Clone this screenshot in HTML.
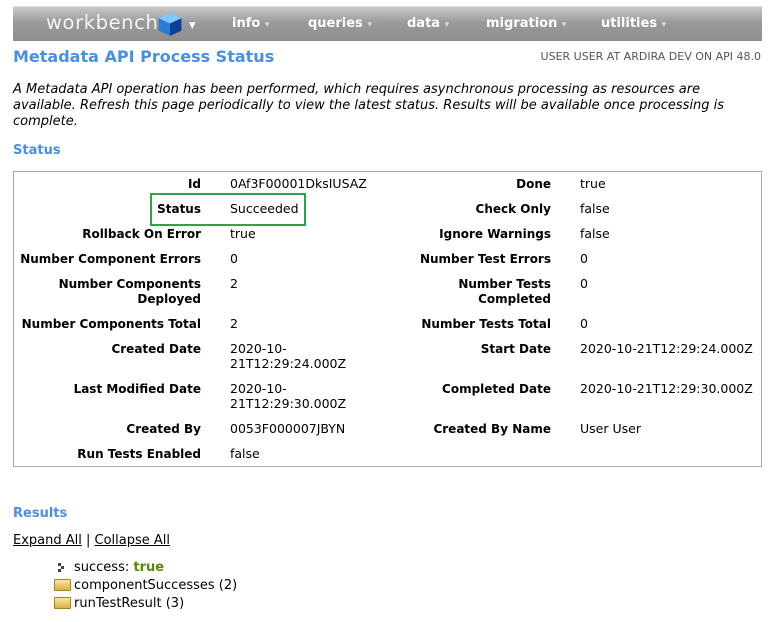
<!DOCTYPE html>
<html><head><style>
body{margin:0;width:778px;height:622px;background:#fff;font-family:"DejaVu Sans","Liberation Sans",sans-serif;color:#000;position:relative;overflow:hidden}
.nav{position:absolute;left:13px;top:6px;width:749px;height:34px;background:linear-gradient(#c8c8c8,#9a9a9a 45%,#8e8e8e);border-top:1px solid #ddd}
.nav span{position:absolute;top:9px;color:#fff;font-weight:bold;font-size:13px}
.nav .logo{top:4px;font-weight:normal;font-size:19.5px;letter-spacing:0.6px;color:#f4f4f4}
.ar{font-size:9px;color:#ddd;font-weight:normal}
h1{position:absolute;left:13px;top:47px;margin:0;font-size:16px;color:#4a90e2;font-weight:bold}
.user{position:absolute;right:17px;top:50px;font-size:11px;color:#555}
.p{position:absolute;left:13px;top:82px;width:740px;font-size:13px;font-style:italic;line-height:16px}
h2{position:absolute;left:13px;margin:0;font-size:13px;color:#4a90e2;font-weight:bold}
.box{position:absolute;left:13px;top:171px;width:747px;height:294px;border:1px solid #aaa}
.l{position:absolute;font-size:12px;font-weight:bold;text-align:right;line-height:15px;margin-top:1px}
.v{position:absolute;font-size:12.5px;line-height:15px}
.hl{position:absolute;left:150px;top:193px;width:152px;height:29px;border:2px solid #2aa54a}
.links{position:absolute;left:13px;top:533px;font-size:13px}
.links u{text-decoration:underline}
.t{position:absolute;left:74px;font-size:13px}
.f{position:absolute;left:54px;width:15px;height:10px;background:linear-gradient(#f8e8a0,#d8b040);border:1px solid #a88420;border-radius:1px}
</style></head><body>
<div class="nav">
<span class="logo" style="left:33px">workbench</span>
<svg style="position:absolute;left:143px;top:4px" width="28" height="27" viewBox="0 0 26 26"><polygon points="13,2 24,7 13,12 2,7" fill="#7ec8ff"/><polygon points="2,7 13,12 13,24 2,19" fill="#2a7ad8"/><polygon points="24,7 13,12 13,24 24,19" fill="#0d3f95"/></svg>
<span style="left:176px;top:11px" class="ar">▾</span>
<span style="left:219px">info <i class="ar">▾</i></span>
<span style="left:295px">queries <i class="ar">▾</i></span>
<span style="left:394px">data <i class="ar">▾</i></span>
<span style="left:473px">migration <i class="ar">▾</i></span>
<span style="left:588px">utilities <i class="ar">▾</i></span>
</div>
<h1>Metadata API Process Status</h1>
<div class="user">USER USER AT ARDIRA DEV ON API 48.0</div>
<div class="p">A Metadata API operation has been performed, which requires asynchronous processing as resources are available. Refresh this page periodically to view the latest status. Results will be available once processing is complete.</div>
<h2 style="top:143px">Status</h2>
<div class="box"></div>
<div class="hl"></div>

<div class="l" style="right:577px;top:176px">Id</div><div class="v" style="left:230px;top:176px">0Af3F00001DksIUSAZ</div>
<div class="l" style="right:227px;top:176px">Done</div><div class="v" style="left:580px;top:176px">true</div>
<div class="l" style="right:577px;top:201px">Status</div><div class="v" style="left:230px;top:201px">Succeeded</div>
<div class="l" style="right:227px;top:201px">Check Only</div><div class="v" style="left:580px;top:201px">false</div>
<div class="l" style="right:577px;top:226px">Rollback On Error</div><div class="v" style="left:230px;top:226px">true</div>
<div class="l" style="right:227px;top:226px">Ignore Warnings</div><div class="v" style="left:580px;top:226px">false</div>
<div class="l" style="right:577px;top:251px">Number Component Errors</div><div class="v" style="left:230px;top:251px">0</div>
<div class="l" style="right:227px;top:251px">Number Test Errors</div><div class="v" style="left:580px;top:251px">0</div>
<div class="l" style="right:577px;top:276px">Number Components<br>Deployed</div><div class="v" style="left:230px;top:276px">2</div>
<div class="l" style="right:227px;top:276px">Number Tests<br>Completed</div><div class="v" style="left:580px;top:276px">0</div>
<div class="l" style="right:577px;top:316px">Number Components Total</div><div class="v" style="left:230px;top:316px">2</div>
<div class="l" style="right:227px;top:316px">Number Tests Total</div><div class="v" style="left:580px;top:316px">0</div>
<div class="l" style="right:577px;top:341px">Created Date</div><div class="v" style="left:230px;top:341px">2020-10-<br>21T12:29:24.000Z</div>
<div class="l" style="right:227px;top:341px">Start Date</div><div class="v" style="left:580px;top:341px">2020-10-21T12:29:24.000Z</div>
<div class="l" style="right:577px;top:381px">Last Modified Date</div><div class="v" style="left:230px;top:381px">2020-10-<br>21T12:29:30.000Z</div>
<div class="l" style="right:227px;top:381px">Completed Date</div><div class="v" style="left:580px;top:381px">2020-10-21T12:29:30.000Z</div>
<div class="l" style="right:577px;top:421px">Created By</div><div class="v" style="left:230px;top:421px">0053F000007JBYN</div>
<div class="l" style="right:227px;top:421px">Created By Name</div><div class="v" style="left:580px;top:421px">User User</div>
<div class="l" style="right:577px;top:446px">Run Tests Enabled</div><div class="v" style="left:230px;top:446px">false</div>

<h2 style="top:506px">Results</h2>
<div class="links"><u>Expand All</u> | <u>Collapse All</u></div>
<div style="position:absolute;left:58px;top:563px;width:3px;height:3px;background:#444;box-shadow:3px 3px 0 #444,0 6px 0 #444"></div>
<div class="t" style="top:560px">success: <b style="color:#5a8a00">true</b></div>
<div class="f" style="top:579px"></div><div class="t" style="top:578px">componentSuccesses (2)</div>
<div class="f" style="top:597px"></div><div class="t" style="top:596px">runTestResult (3)</div>
</body></html>
